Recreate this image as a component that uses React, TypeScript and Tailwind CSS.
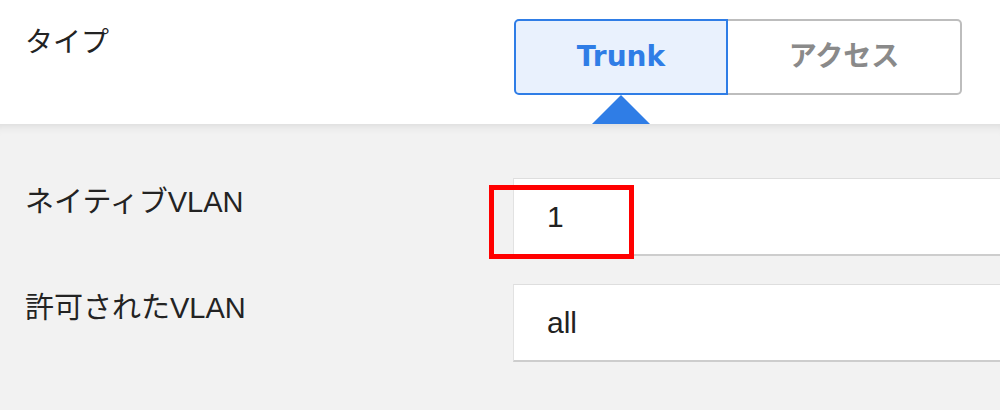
import React from "react";

const font = { fontFamily: '"Liberation Sans", "Noto Sans CJK JP", sans-serif' };

function FieldRow({ label, value, marked }: { label: string; value: string; marked?: boolean }) {
  return (
    <div className="flex">
      <div className="w-[513px] shrink-0 pl-[25px]">
        <p className="mt-[10px] text-[29px] leading-[29px] text-[#232323]">{label}</p>
      </div>
      <div className="relative flex-1">
        <input
          readOnly
          defaultValue={value}
          className="block h-[78px] w-full border-t border-l border-b-2 border-t-[#dedede] border-l-[#e2e2e2] border-b-[#cdcdcd] bg-white pl-[33px] text-[30px] text-[#222] outline-none"
        />
        {marked && (
          <div className="pointer-events-none absolute top-[7px] -left-[24px] h-[74px] w-[145px] border-[5px] border-[#ff0000]"></div>
        )}
      </div>
    </div>
  );
}

export default function App() {
  return (
    <div className="h-[410px] w-[1000px] overflow-hidden bg-[#f2f2f2]" style={font}>
      <div className="flex h-[124px] bg-white">
        <div className="w-[514px] shrink-0 pl-[25px] pt-[19px]">
          <p className="mt-[10px] text-[28px] leading-[28px] text-[#232323]">タイプ</p>
        </div>
        <div className="flex flex-col pt-[19px]">
          <div className="flex">
            <button className="flex h-[76px] w-[214px] items-center justify-center rounded-l-[5px] border-2 border-[#2f7de6] bg-[#e9f1fd] text-[28px] font-bold text-[#2f7de6]" style={{ fontFamily: '"DejaVu Sans", sans-serif' }}>
              Trunk
            </button>
            <button className="flex h-[76px] w-[234px] items-center justify-center rounded-r-[5px] border-2 border-l-0 border-[#bdbdbd] bg-white text-[28px] font-bold text-[#8a8a8a]">
              アクセス
            </button>
          </div>
          <div className="flex w-[214px] justify-center">
            <div className="h-0 w-0 border-r-[29px] border-b-[29px] border-l-[29px] border-r-transparent border-b-[#2f7de6] border-l-transparent"></div>
          </div>
        </div>
      </div>
      <div className="flex flex-col gap-[28px] pt-[54px] shadow-[inset_0_10px_10px_-8px_rgba(0,0,0,0.1)]">
        <FieldRow label="ネイティブVLAN" value="1" marked />
        <FieldRow label="許可されたVLAN" value="all" />
      </div>
    </div>
  );
}
